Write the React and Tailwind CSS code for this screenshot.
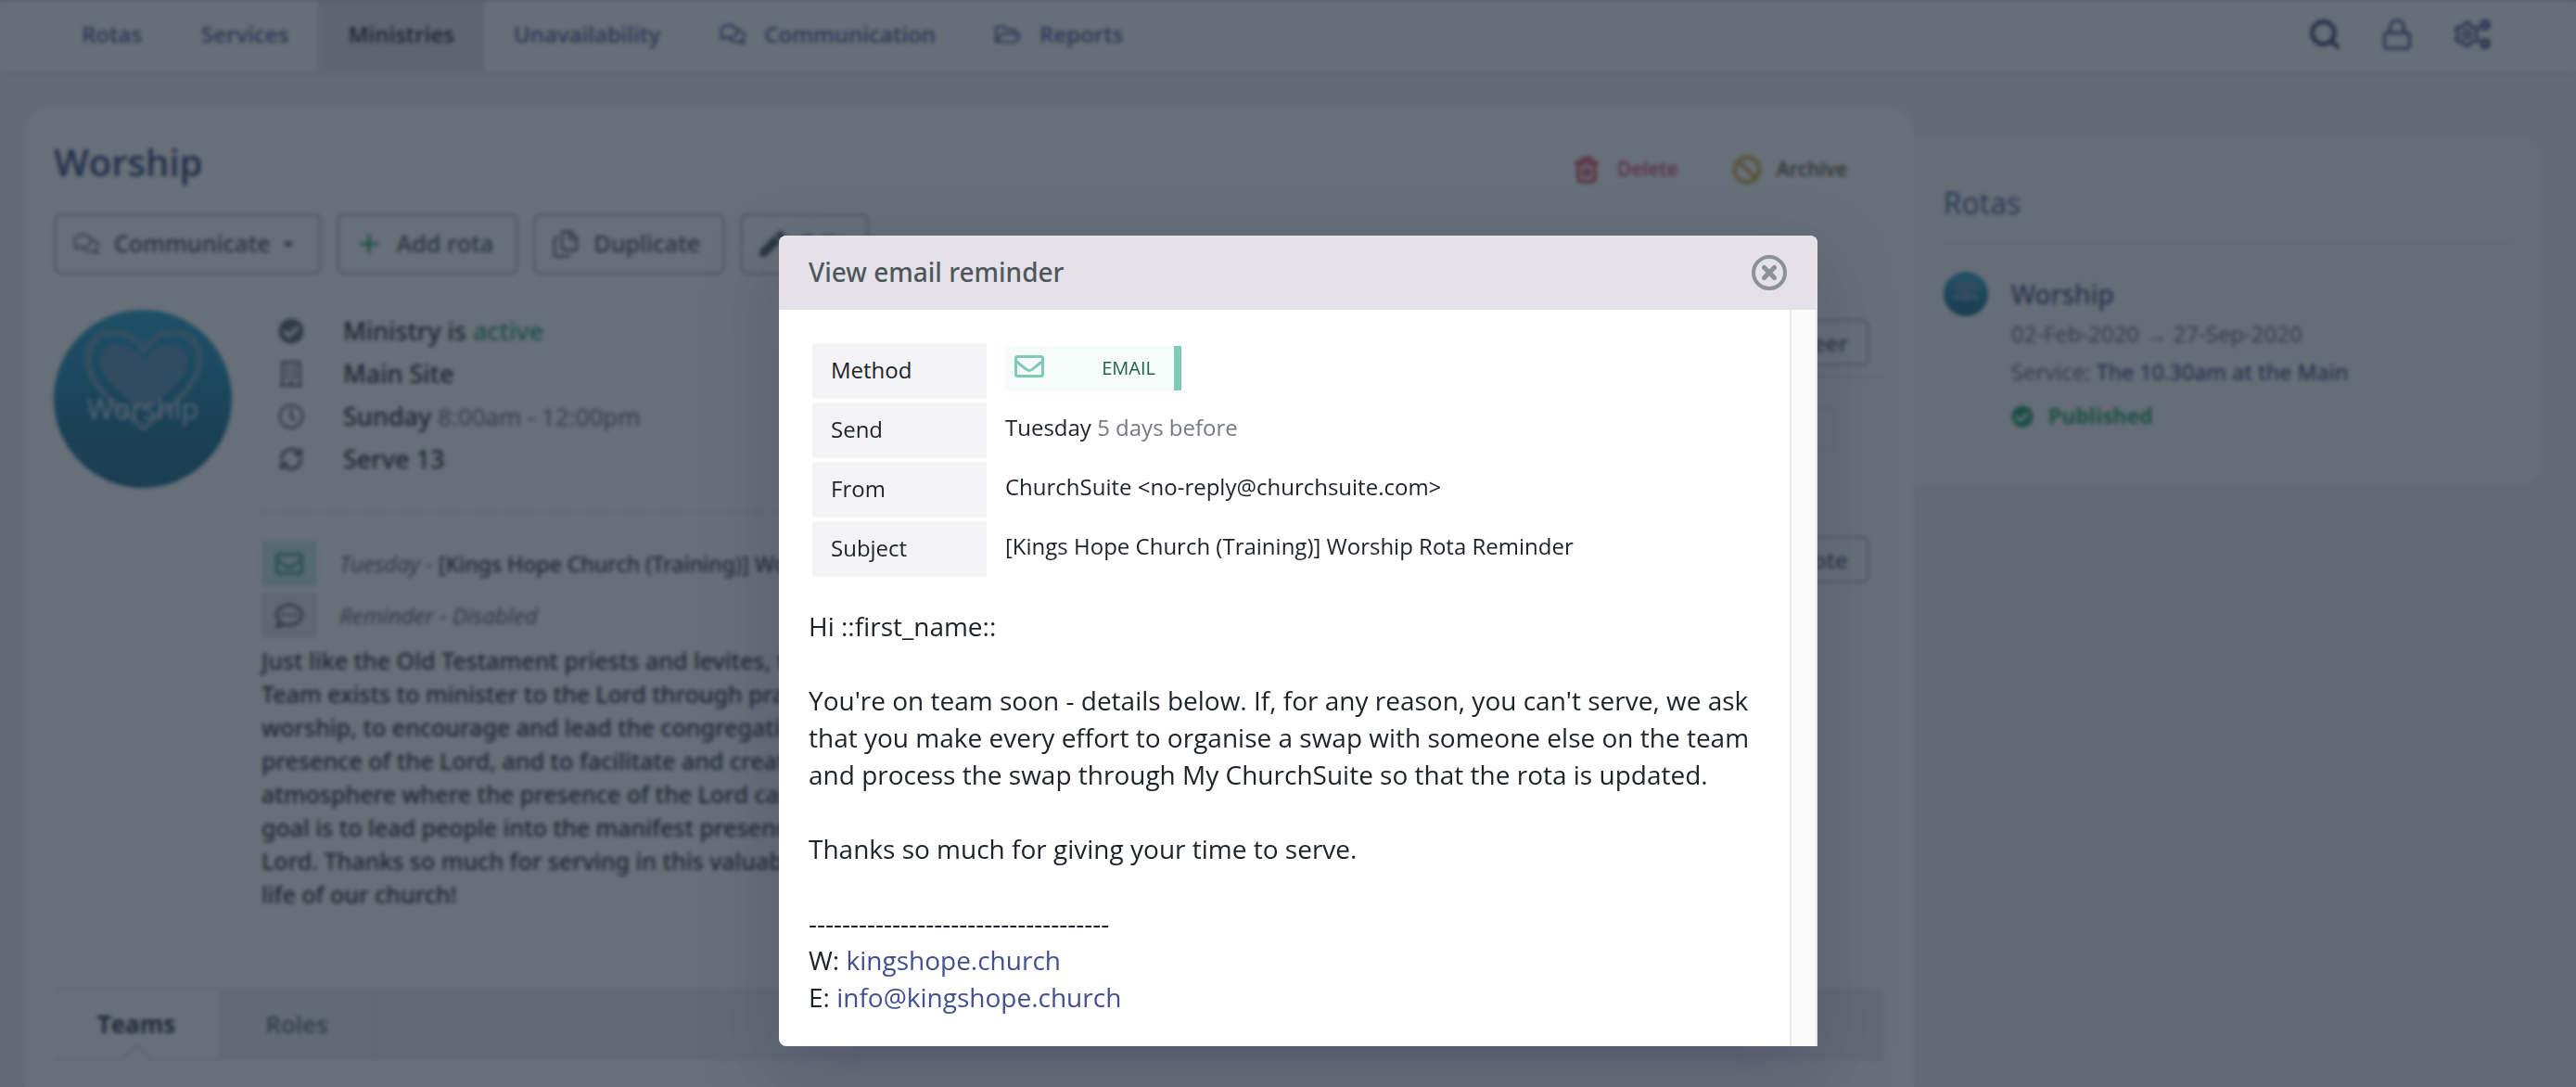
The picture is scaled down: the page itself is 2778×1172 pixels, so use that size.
import React from "react";
import { FaRegComments, FaRegFolderOpen, FaCheckCircle, FaRegBuilding, FaRegClock, FaCaretDown, FaPen, FaRegEnvelope, FaRegCommentDots } from "react-icons/fa";
import { Ban, Files, Lock, RefreshCw, Search, Settings, Trash2 } from "lucide-react";

const navItems = [
  { label: "Rotas" },
  { label: "Services" },
  { label: "Ministries", active: true },
  { label: "Unavailability" },
  { label: "Communication", icon: FaRegComments },
  { label: "Reports", icon: FaRegFolderOpen },
];

const Avatar = ({ className }) => (
  <svg viewBox="0 0 192 192" className={className} role="img" aria-label="Worship">
    <defs>
      <linearGradient id="sea" x1="0" y1="0" x2="0" y2="1">
        <stop offset="0" stopColor="#0c98c0" />
        <stop offset="0.35" stopColor="#0680ae" />
        <stop offset="0.6" stopColor="#006890" />
        <stop offset="1" stopColor="#005a80" />
      </linearGradient>
    </defs>
    <circle cx="96" cy="96" r="96" fill="url(#sea)" />
    <path d="M97 128C70 106 37 82 37 54c0-38 44-38 60-11 16-27 60-27 60 11 0 28-33 52-60 74z" fill="none" stroke="#5f93b4" strokeWidth="6" />
    <path d="M97 110C76 92 50 76 50 56c0-24 34-24 47 0 13-24 47-24 47 0 0 20-26 36-47 54z" fill="#5088b0" />
    <text x="96" y="118" textAnchor="middle" fontSize="31" fill="#c5dcec" fontFamily="Open Sans, sans-serif">Worship</text>
  </svg>
);

const CogsIcon = () => (
  <svg viewBox="0 0 42 36" className="h-9 w-[42px]" fill="none" stroke="currentColor">
    <Settings x="0" y="2" width="31" height="32" strokeWidth="2.4" />
    <circle cx="35" cy="8" r="4" strokeWidth="4" />
    <circle cx="35" cy="28" r="4" strokeWidth="4" />
  </svg>
);

const PlusIcon = ({ className }) => (
  <svg viewBox="0 0 28 28" className={className} fill="none" stroke="currentColor" strokeWidth="3" strokeLinecap="round">
    <path d="M14 5v18M5 14h18" />
  </svg>
);

const ToolButton = ({ icon: Icon, iconClass, caret, children }) => (
  <button className="flex h-[66px] items-center gap-4 rounded-lg border-[3px] border-[#c3c6cf] pr-6 pl-[18px] text-[25px] font-semibold text-[#37414d]">
    <span className="flex w-7 justify-center"><Icon className={iconClass} /></span>
    {children}
    {caret && <FaCaretDown className="-ml-1.5 size-[18px]" />}
  </button>
);

const Fact = ({ icon: Icon, children }) => (
  <li className="flex h-[46px] items-center gap-[42px] font-['Noto_Sans',sans-serif] text-[27px] font-medium text-[#05080f]">
    <Icon className="ml-[18px] size-7 text-[#4b5462]" />
    <span>{children}</span>
  </li>
);

const Row = ({ label, children }) => (
  <tr className="h-[60px]">
    <th scope="row" className="w-[188px] bg-[#f3f3f5] px-5 pb-0.5 text-left font-normal">{label}</th>
    <td className="px-4 pb-1.5">{children}</td>
  </tr>
);

const Page = () => (
  <div className="min-h-screen bg-[#f0f0f1]">
    <header className="flex h-[78px] items-stretch justify-between border-t-2 border-[#d5d5dc] bg-[#fbfbfd] pr-[91px] pl-14 shadow-sm">
      <nav className="flex text-[24px] font-semibold text-[#33458a]">
        {navItems.map(({ label, icon: Icon, active }) => (
          <a key={label} href="#" className={active ? "flex items-center gap-5 bg-[#dcdce4] px-8 pb-1.5 text-[#05070c]" : "flex items-center gap-5 px-8 pb-1.5"}>
            {Icon && <Icon className="size-7" />}
            {label}
          </a>
        ))}
      </nav>
      <div className="flex items-center gap-[42px] pb-1.5 text-[#2c3b7c]">
        <button aria-label="Search"><Search className="size-9 text-[#1b2558]" strokeWidth={3} /></button>
        <button aria-label="Lock"><Lock className="size-9" strokeWidth={2} /></button>
        <button aria-label="Settings"><CogsIcon /></button>
      </div>
    </header>

    <div className="grid grid-cols-[3fr_1fr] items-start pt-[37px] pr-[35px] pl-[26px]">
      <main className="min-w-0 rounded-[28px] bg-white px-8 pt-8 pb-20 shadow-sm">
        <div className="flex items-center justify-between">
          <h1 className="text-[40px] leading-[56px] font-semibold text-[#1a2768]">Worship</h1>
          <div className="flex gap-[58px] pt-4 pr-10 text-[21px] font-semibold">
            <button className="flex items-center gap-[18px] text-[#d8304c]"><Trash2 className="size-[30px]" strokeWidth={3} />Delete</button>
            <button className="flex items-center gap-4 text-[#4a4420]"><Ban className="size-8" color="#c79a1c" strokeWidth={3} />Archive</button>
          </div>
        </div>
        <div className="mt-[27px] flex gap-4">
          <ToolButton icon={FaRegComments} iconClass="size-7 text-[#6c7480]" caret>Communicate</ToolButton>
          <ToolButton icon={PlusIcon} iconClass="size-7 text-[#00955c]">Add rota</ToolButton>
          <ToolButton icon={Files} iconClass="size-8 shrink-0 text-[#4b5462]">Duplicate</ToolButton>
          <ToolButton icon={FaPen} iconClass="size-7 text-[#37414d]">Edit</ToolButton>
        </div>

        <div className="mt-[38px] flex gap-8">
          <Avatar className="size-48 shrink-0" />
          <div className="flex-[2]">
            <ul className="border-b-2 border-dashed border-[#d5d8e2] pb-[33px]">
              <Fact icon={FaCheckCircle}>Ministry is <span className="text-[#009458]">active</span></Fact>
              <Fact icon={FaRegBuilding}>Main Site</Fact>
              <Fact icon={FaRegClock}>Sunday <span className="font-['Open_Sans',sans-serif] text-[26px] font-normal text-[#4a525f]">8:00am - 12:00pm</span></Fact>
              <Fact icon={(props) => <RefreshCw strokeWidth={3} {...props} />}>Serve 13</Fact>
            </ul>
            <div className="mt-[30px] flex flex-col gap-[7px] text-[24px] text-[#434b58]">
              <div className="flex items-center gap-6">
                <span className="flex h-[49px] w-[60px] items-center justify-center bg-[#c4ebdf]"><FaRegEnvelope className="size-[30px] text-[#1f8a69]" /></span>
                <span className="whitespace-nowrap"><i>Tuesday</i> - <span className="font-['Noto_Sans',sans-serif] text-[23px] font-medium text-[#10151e]">[Kings Hope Church (Training)] Worship Rota Reminder</span></span>
              </div>
              <div className="flex items-center gap-6">
                <span className="flex h-[49px] w-[60px] items-center justify-center bg-[#e4e4ef]"><FaRegCommentDots className="size-[30px] text-[#3c4553]" /></span>
                <i>Reminder - Disabled</i>
              </div>
            </div>
            <p className="mt-1.5 font-['Noto_Sans',sans-serif] text-[25px] leading-9 font-medium whitespace-nowrap text-[#05080f]">
              Just like the Old Testament priests and levites, the Worship<br />
              Team exists to minister to the Lord through praise and<br />
              worship, to encourage and lead the congregation into the<br />
              presence of the Lord, and to facilitate and create an<br />
              atmosphere where the presence of the Lord can dwell. Our<br />
              goal is to lead people into the manifest presence of the<br />
              Lord. Thanks so much for serving in this valuable part of the<br />
              life of our church!
            </p>
          </div>
          <div className="flex flex-1 flex-col items-end pt-2.5 text-[24px] font-semibold text-[#37414d]">
            <div className="flex w-full justify-end border-b-2 border-[#dfe1e8] pr-4 pb-2.5">
              <button className="h-[51px] rounded-lg border-[3px] border-[#c3c6cf] px-5">Add volunteer</button>
            </div>
            <div className="mt-8 mr-[52px] h-[47px] w-80 rounded-lg border-2 border-[#dfe1e8]" />
            <button className="mt-[92px] mr-4 h-[51px] rounded-lg border-[3px] border-[#c3c6cf] px-5">Add note</button>
          </div>
        </div>

        <div className="mt-[84px] flex h-[77px] border-y-2 border-[#e2e3e9] bg-[#edeef1] text-[26px]">
          <button className="relative w-[178px] bg-white font-bold text-[#10151e]">
            Teams
            <span className="absolute bottom-[-13px] left-1/2 size-6 -translate-x-1/2 rotate-45 border-t-2 border-l-2 border-[#d0d3dc] bg-white" />
          </button>
          <button className="w-[168px] border-x-2 border-[#e2e3e9] font-semibold text-[#4b5870]">Roles</button>
        </div>
      </main>

      <aside className="mt-8 min-w-0 rounded-r-[28px] bg-[#f9f9fb] px-8 pt-[47px] pb-14 shadow-sm">
        <h2 className="border-b-2 border-[#e4e4f0] pb-[17px] text-[32px] leading-[50px] font-medium text-[#2c3b80]">Rotas</h2>
        <div className="mt-[30px] flex gap-[25px]">
          <Avatar className="size-12 shrink-0" />
          <div className="text-[24px] leading-[41px] text-[#4a525f]">
            <h3 className="pt-0.5 font-['Noto_Sans',sans-serif] text-[28px] leading-[44px] font-medium text-[#24336f]">Worship</h3>
            <p>02-Feb-2020 → 27-Sep-2020</p>
            <p>Service: <a href="#" className="font-['Noto_Sans',sans-serif] text-[23px] font-medium text-[#24336f]">The 10.30am at the Main</a></p>
            <p className="mt-1.5 flex items-center gap-4 text-[23px] font-bold text-[#009450]"><FaCheckCircle className="size-6" />Published</p>
          </div>
        </div>
      </aside>
    </div>
  </div>
);

const EmailModal = () => (
  <div role="dialog" aria-label="View email reminder" className="w-[1120px] max-w-full overflow-hidden rounded-t-lg rounded-bl-lg bg-white text-[#1d2228] shadow-[0_30px_80px_rgba(56,58,96,0.35)]">
    <div className="flex h-20 items-center justify-between bg-[#e4e1e8] pr-[33px] pl-8">
      <h2 className="pb-0.5 font-['Noto_Sans',sans-serif] text-[28px] font-medium text-[#4f575b]">View email reminder</h2>
      <button aria-label="Close" className="text-[#8b9194]">
        <svg viewBox="0 0 38 38" className="size-[38px]" fill="none" stroke="currentColor">
          <circle cx="19" cy="19" r="17" strokeWidth="4" />
          <path d="M13.500 13.500l11 11M24.500 13.500l-11 11" strokeWidth="5" strokeLinecap="round" />
        </svg>
      </button>
    </div>
    <div className="flex">
      <div className="min-w-0 flex-1 px-8 pt-8 pb-[33px]">
        <table className="w-full border-separate border-spacing-1 text-[24px]">
          <tbody>
            <Row label="Method">
              <span className="flex h-12 w-[190px] items-center justify-between border-r-8 border-[#7dcab5] bg-[#f5fbf9] pr-5 pl-2.5 text-[20px] text-[#22614c]">
                <FaRegEnvelope className="mb-1 size-8 text-[#7dcab5]" />
                EMAIL
              </span>
            </Row>
            <Row label="Send">Tuesday <span className="text-[#757a82]">5 days before</span></Row>
            <Row label="From">ChurchSuite &lt;no-reply@churchsuite.com&gt;</Row>
            <Row label="Subject">[Kings Hope Church (Training)] Worship Rota Reminder</Row>
          </tbody>
        </table>
        <div className="mt-[29px] text-[28px] leading-10">
          <p>Hi ::first_name::</p>
          <p className="mt-10">You're on team soon - details below. If, for any reason, you can't serve, we ask that you make every effort to organise a swap with someone else on the team and process the swap through My ChurchSuite so that the rota is updated.</p>
          <p className="mt-10">Thanks so much for giving your time to serve.</p>
          <p className="mt-10">------------------------------------</p>
          <p>W: <a href="#" className="text-[#444f8f]">kingshope.church</a></p>
          <p>E: <a href="#" className="text-[#444f8f]">info@kingshope.church</a></p>
        </div>
      </div>
      <div className="w-[30px] border-x-2 border-[#e8e8e8] bg-[#fafafa]" />
    </div>
  </div>
);

const App = () => (
  <div className="relative h-screen overflow-hidden font-['Open_Sans','Noto_Sans',sans-serif]">
    <Page />
    {/* Backdrop and dialog */}
    <div className="absolute inset-0 flex items-start justify-center bg-[#27323f]/70 pt-[254px] pl-[22px] backdrop-blur-[2px]">
      <EmailModal />
    </div>
  </div>
);

export default App;
